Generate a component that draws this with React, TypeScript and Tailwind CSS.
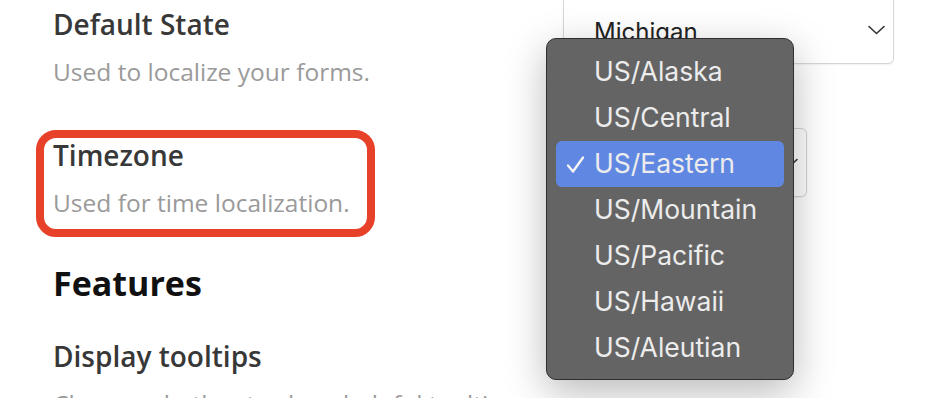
import React from 'react';

const zones = ['US/Alaska', 'US/Central', 'US/Eastern', 'US/Mountain', 'US/Pacific', 'US/Hawaii', 'US/Aleutian'];

function Chevron() {
  return (
    <svg width="17" height="10" viewBox="0 0 17 10" fill="none">
      <path d="M1 1.5 8.5 8.5 16 1.5" stroke="#333" strokeWidth="1.6" strokeLinecap="round" strokeLinejoin="round" />
    </svg>
  );
}

function SelectBox({ value, className }: { value: string; className: string }) {
  return (
    <div
      className={`flex h-[69px] items-center justify-between rounded-[6px] border border-[#d6d6d6] bg-white pl-[30px] pr-[8px] shadow-[0_1px_2px_rgba(0,0,0,0.06)] ${className}`}
    >
      <span className="pt-[4px] text-[24px] text-[#222]" style={{ fontFamily: 'Inter, sans-serif' }}>
        {value}
      </span>
      <Chevron />
    </div>
  );
}

function Setting({ title, hint }: { title: string; hint: string }) {
  return (
    <div>
      <div className="text-[28px] font-semibold leading-[34px] text-[#383838]">{title}</div>
      <div className="mt-[16px] text-[24.5px] leading-[30px] text-[#9a9a9a]">{hint}</div>
    </div>
  );
}

export default function App() {
  return (
    <div
      className="relative flex h-[398px] w-[934px] overflow-hidden bg-white"
      style={{ fontFamily: '"Open Sans", "Noto Sans", sans-serif' }}
    >
      <div className="flex-1 pl-[53px] pt-[7px]">
        <Setting title="Default State" hint="Used to localize your forms." />

        <div className="-ml-[17px] mt-[43px] w-[339px] rounded-[20px] border-[8px] border-[#e8412a] pb-[11px] pl-[9px]">
          <Setting title="Timezone" hint="Used for time localization." />
        </div>

        <h2 className="mt-[25px] text-[34px] font-bold leading-[42px] text-[#111]">Features</h2>

        <div className="mt-[35px]">
          <Setting title="Display tooltips" hint="Choose whether to show helpful tooltips." />
        </div>
      </div>

      <div className="mr-[40px] -mt-[5px] flex w-[331px] flex-col gap-[64px]">
        <SelectBox value="Michigan" className="w-full" />
        <SelectBox value="US/Eastern" className="w-[244px]" />
      </div>

      <div
        className="absolute left-[546px] top-[38px] w-[248px] rounded-[10px] border border-[#2f2f2f] bg-[#646464] px-[9px] pb-[8px] pt-[10px] shadow-[0_12px_40px_rgba(0,0,0,0.28)]"
        style={{ fontFamily: 'Inter, sans-serif' }}
      >
        {zones.map((z) => {
          const active = z === 'US/Eastern';
          return (
            <div
              key={z}
              className={`flex h-[46px] items-center rounded-[6px] ${active ? 'bg-[#6088e2]' : ''}`}
            >
              <div className="flex w-[38px] justify-end pr-[9px]">
                {active && (
                  <svg width="19" height="19" viewBox="0 0 19 19" fill="none">
                    <path d="M2 10.5 7 16.5 17 2.5" stroke="#f4f4f4" strokeWidth="2.4" strokeLinecap="round" strokeLinejoin="round" />
                  </svg>
                )}
              </div>
              <span className="text-[26.5px] text-[#ececec]">{z}</span>
            </div>
          );
        })}
      </div>
    </div>
  );
}
